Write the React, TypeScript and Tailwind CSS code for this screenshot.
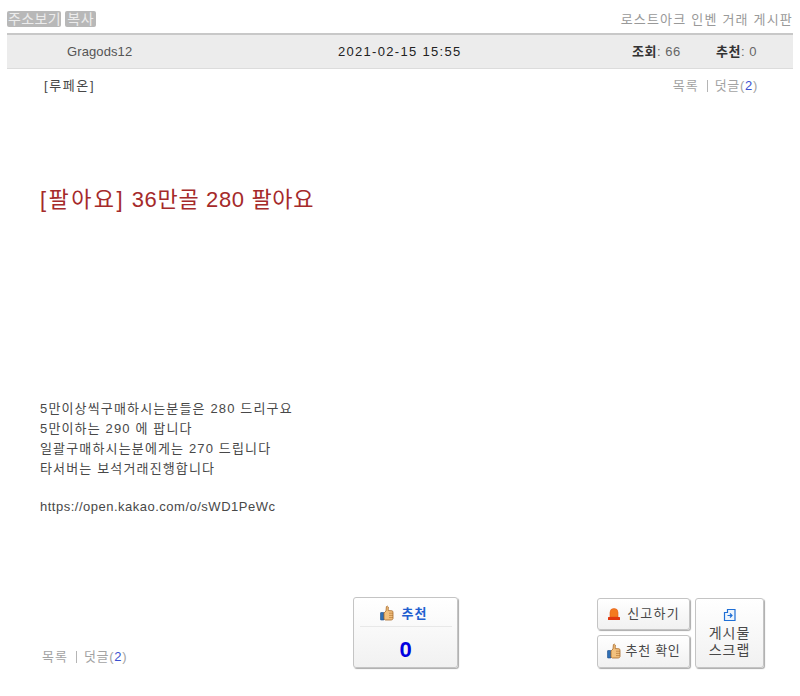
import React from 'react';

const FONT = 'font-["Liberation_Sans","Noto_Sans_CJK_KR",sans-serif]';

const ThumbIcon = () => (
  <svg width="14" height="16" viewBox="0 0 14 16">
    <rect x="0.5" y="7.5" width="3.5" height="7.5" rx="0.5" fill="#2f6fb5" stroke="#1f4f8a" strokeWidth="0.6" />
    <path d="M4 8 L6 6 L6.4 1.6 Q7.6 0.6 8.3 2 L8.2 5.6 L12 5.8 Q13.4 6.2 13 7.6 L13 13.6 Q12.6 15 11.2 15 L5.4 15 L4 14 Z" fill="#f2c17e" stroke="#a8692a" strokeWidth="0.8" />
    <path d="M9 8.2 H13 M9 10.4 H13 M9 12.6 H13" stroke="#a8692a" strokeWidth="0.6" />
  </svg>
);

const AlarmIcon = () => (
  <svg width="14" height="14" viewBox="0 0 14 14">
    <path d="M3 10 L3 5.5 Q3 1.5 7 1.5 Q11 1.5 11 5.5 L11 10 Z" fill="#f47a1f" stroke="#e2601a" strokeWidth="0.6" />
    <rect x="1" y="10" width="12" height="3" rx="0.5" fill="#e2380f" />
  </svg>
);

const ScrapIcon = () => (
  <svg width="14" height="14" viewBox="0 0 14 14" fill="none" stroke="#1f6fd6" strokeWidth="1.2">
    <path d="M1.5 4.5 H4.5 V1.5 H12 V12.5 H1.5 Z" fill="#eef5fd" />
    <path d="M4.5 7.5 H9 M7 5.5 L9 7.5 L7 9.5" />
  </svg>
);

const btn = 'flex items-center justify-center rounded-[3px] border border-[#c4c4c4] bg-gradient-to-b from-white to-[#f1f1f1] shadow-[1px_1px_1px_#aaaaaa]';

const ListLinks = () => (
  <div className="flex items-center text-[13px] tracking-[1px] text-[#a3a3a3]">
    <span>목록</span>
    <span className="ml-[8px] mr-[7px] h-[12px] w-px bg-[#b5b5b5]" />
    <span className="tracking-[0.7px]">덧글(<span className="text-[#3b4fd0]">2</span>)</span>
  </div>
);

export default function App() {
  return (
    <div className={`${FONT} h-[696px] w-[800px] overflow-hidden bg-white text-[#484848]`}>
      <div className="flex items-start justify-between pl-[7px] pr-[7px] pt-[11px]">
        <div className="flex gap-[4px]">
          <span className="rounded-[2px] bg-[#b8b8b8] pl-[1px] text-[14px] leading-[16px] tracking-[0.4px] text-[#ececec]">주소보기</span>
          <span className="rounded-[2px] bg-[#b8b8b8] px-[2px] text-[14px] leading-[16px] tracking-[0.7px] text-[#ececec]">복사</span>
        </div>
        <div className="mt-[1px] text-[13px] leading-[16px] tracking-[1.2px] text-[#999999]">로스트아크 인벤 거래 게시판</div>
      </div>

      <div className="mx-[7px] mt-[5px] flex h-[36px] items-center border-y border-[#dcdcdc] border-t-[2px] border-t-[#c8c8c8] bg-[#ececec] text-[13px]">
        <div className="w-[331px] pl-[60px] tracking-[0.1px] text-[#555555]">Gragods12</div>
        <div className="w-[294px] font-medium tracking-[1.3px] text-[#222222]">2021-02-15 15:55</div>
        <div className="w-[84px] tracking-[0.5px] text-[#666666]"><span className="font-bold text-[#333333]">조회</span>: 66</div>
        <div className="tracking-[0.5px] text-[#666666]"><span className="font-bold text-[#333333]">추천</span>: 0</div>
      </div>

      <div className="mt-[7px] flex items-center justify-between pl-[44px] pr-[42px] text-[13px]">
        <span className="tracking-[1.6px]">[루페온]</span>
        <ListLinks />
      </div>

      <h1 className="mt-[89px] pl-[40px] text-[22px] leading-[30px] tracking-[0.65px] text-[#a52a2a]">
        <span className="tracking-[2.4px]">[팔아요]</span> 36만골 280 팔아요
      </h1>

      <div className="mt-[184px] pl-[40px] text-[13px] leading-[20px] tracking-[1.15px]">
        <p>5만이상씩구매하시는분들은 280 드리구요</p>
        <p>5만이하는 290 에 팝니다</p>
        <p>일괄구매하시는분에게는 270 드립니다</p>
        <p>타서버는 보석거래진행합니다</p>
        <p className="mt-[18px] tracking-[0.5px]">https://open.kakao.com/o/sWD1PeWc</p>
      </div>

      <div className="mt-[80px] flex items-end">
        <div className="mb-[1px] w-[353px] pl-[42px]"><ListLinks /></div>
        <div className={`${btn} h-[71px] w-[105px] flex-col`}>
          <div className="flex h-[30px] w-[92px] items-center justify-center gap-[8px] border-b border-[#e8e8e8] pr-[4px] pt-[3px] text-[13px] font-bold tracking-[1px] text-[#1f5fd0]">
            <ThumbIcon />
            <span>추천</span>
          </div>
          <div className="flex h-[40px] items-center pt-[5px] text-[22px] font-bold text-[#0000e0]">0</div>
        </div>
        <div className="ml-[139px] flex flex-col gap-[5px]">
          <div className={`${btn} h-[32px] w-[93px] gap-[6px] text-[13px] tracking-[1.2px]`}><AlarmIcon /><span>신고하기</span></div>
          <div className={`${btn} h-[33px] w-[93px] gap-[5px] text-[13px] tracking-[0.7px]`}><ThumbIcon /><span>추천 확인</span></div>
        </div>
        <div className={`${btn} ml-[5px] h-[70px] w-[69px] flex-col pt-[2px] text-[14px] leading-[17px] tracking-[1px]`}>
          <ScrapIcon />
          <span className="mt-[3px]">게시물</span>
          <span>스크랩</span>
        </div>
      </div>
    </div>
  );
}
